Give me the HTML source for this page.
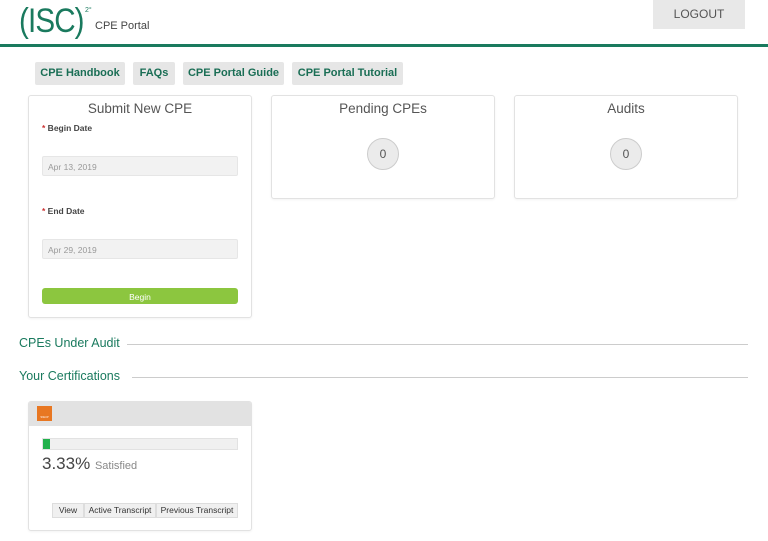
<!DOCTYPE html>
<html><head><meta charset="utf-8"><style>
*{box-sizing:border-box;margin:0;padding:0}
body{width:768px;height:541px;background:#fff;font-family:"Liberation Sans",sans-serif;position:relative;overflow:hidden;color:#555}
.a{position:absolute}
.logo{left:19px;top:2px;font-size:34px;color:#1a7a5e;letter-spacing:-1px;transform:scaleX(0.87);transform-origin:left top}
.hl{left:0;top:44px;width:768px;height:3px;background:#1a7a5e}
.btn{background:#e6e6e6;color:#1a6e55;font-weight:bold;font-size:11px;height:23px;line-height:23px;text-align:center;border-radius:2px;top:62px;white-space:nowrap}
.card{border:1px solid #e2e2e2;border-radius:3px;background:#fff;box-shadow:0 1px 2px rgba(0,0,0,.05)}
.ttl{font-size:13.5px;color:#555;text-align:center}
.lbl{font-size:8.5px;font-weight:bold;color:#444}
.lbl b{color:#c33}
.inp{background:#f2f2f2;border:1px solid #e6e6e6;border-radius:2px;font-size:8.5px;color:#999;padding-left:5px;height:20px;line-height:20px}
.circ{width:32px;height:32px;border-radius:50%;background:#ebebeb;border:1px solid #ccc;text-align:center;line-height:30px;font-size:12px;color:#555}
.sec{font-size:12.5px;color:#1a7a5e}
.line{height:1px;background:#ccc}
.tb{background:#f0f0f0;border:1px solid #ddd;font-size:8.5px;color:#333;height:15px;line-height:13px;text-align:center;top:503px}
</style></head><body>
<div class="a logo">(ISC)</div>
<div class="a" style="left:85px;top:7px;font-size:7px;color:#1a7a5e">2°</div>
<div class="a" style="left:95px;top:20px;font-size:11px;color:#444">CPE Portal</div>
<div class="a" style="left:653px;top:0;width:92px;height:29px;background:#e8e8e8;text-align:center;line-height:28px;font-size:12px;color:#555">LOGOUT</div>
<div class="a hl"></div>
<div class="a btn" style="left:35px;width:90px">CPE Handbook</div>
<div class="a btn" style="left:133px;width:42px">FAQs</div>
<div class="a btn" style="left:183px;width:101px">CPE Portal Guide</div>
<div class="a btn" style="left:292px;width:111px">CPE Portal Tutorial</div>

<div class="a card" style="left:28px;top:95px;width:224px;height:223px"></div>
<div class="a ttl" style="left:28px;top:101px;width:224px">Submit New CPE</div>
<div class="a lbl" style="left:42px;top:123px"><b>*</b> Begin Date</div>
<div class="a inp" style="left:42px;top:156px;width:196px">Apr 13, 2019</div>
<div class="a lbl" style="left:42px;top:206px"><b>*</b> End Date</div>
<div class="a inp" style="left:42px;top:239px;width:196px">Apr 29, 2019</div>
<div class="a" style="left:42px;top:288px;width:196px;height:16px;background:#8cc63f;border-radius:3px;color:#fff;font-size:8.5px;text-align:center;line-height:18px">Begin</div>

<div class="a card" style="left:271px;top:95px;width:224px;height:104px"></div>
<div class="a ttl" style="left:271px;top:101px;width:224px">Pending CPEs</div>
<div class="a circ" style="left:367px;top:138px">0</div>
<div class="a card" style="left:514px;top:95px;width:224px;height:104px"></div>
<div class="a ttl" style="left:514px;top:101px;width:224px">Audits</div>
<div class="a circ" style="left:610px;top:138px">0</div>

<div class="a sec" style="left:19px;top:336px">CPEs Under Audit</div>
<div class="a line" style="left:127px;top:344px;width:621px"></div>
<div class="a sec" style="left:19px;top:369px">Your Certifications</div>
<div class="a line" style="left:132px;top:377px;width:616px"></div>

<div class="a card" style="left:28px;top:401px;width:224px;height:130px;overflow:hidden"><div style="height:24px;background:#e2e2e2"></div></div>
<div class="a" style="left:37px;top:406px;width:15px;height:15px;background:#e87722;color:#fff;font-size:3px;line-height:22px;text-align:center">SSCP</div>
<div class="a" style="left:42px;top:438px;width:196px;height:12px;background:#f0f0f0;border:1px solid #e2e2e2"></div>
<div class="a" style="left:43px;top:439px;width:7px;height:10px;background:#22b14c"></div>
<div class="a" style="left:42px;top:454px;font-size:17px;color:#444">3.33% <span style="font-size:11px;color:#888">Satisfied</span></div>
<div class="a tb" style="left:52px;width:32px">View</div>
<div class="a tb" style="left:84px;width:72px">Active Transcript</div>
<div class="a tb" style="left:156px;width:82px">Previous Transcript</div>
</body></html>
